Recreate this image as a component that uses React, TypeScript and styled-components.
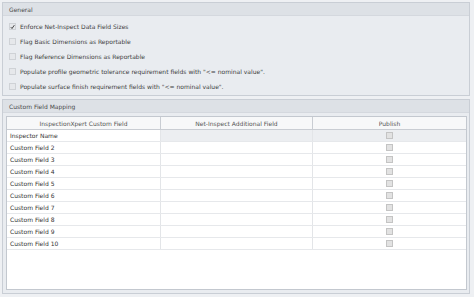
import type { FC } from "react";
import styled, { createGlobalStyle } from "styled-components";

const GlobalStyle = createGlobalStyle`
  html, body {
    margin: 0;
    padding: 0;
    background: #eef0f3;
  }
`;

const Screen = styled.div`
  width: 474px;
  height: 297px;
  box-sizing: border-box;
  padding: 2px 4px 3px 2px;
  display: flex;
  flex-direction: column;
  gap: 3px;
  background: #eef0f3;
  font-family: "DejaVu Sans", "Liberation Sans", sans-serif;
  font-size: 6px;
  color: #404040;
  overflow: hidden;
`;

const Panel = styled.section<{ $grow?: boolean }>`
  display: flex;
  flex-direction: column;
  border: 1px solid #c9ced5;
  background: #e9ecf0;
  flex: ${(p) => (p.$grow ? "1" : "none")};
  height: ${(p) => (p.$grow ? "auto" : "92px")};
  min-height: 0;
`;

const PanelHeader = styled.div`
  height: 12px;
  display: flex;
  align-items: center;
  padding-left: 6px;
  background: #dde1e6;
  border-bottom: 1px solid #d4d8de;
  color: #4a4a4a;
`;

const OptionList = styled.div`
  display: flex;
  flex-direction: column;
  padding: 3px 5px 0 6px;
`;

const OptionRow = styled.label`
  height: 15px;
  display: flex;
  align-items: center;
  gap: 4px;
`;

const Box = styled.span<{ $dark?: boolean }>`
  width: 7px;
  height: 7px;
  box-sizing: border-box;
  border: 1px solid ${(p) => (p.$dark ? "#c4c4c4" : "#cfd2d6")};
  background: ${(p) => (p.$dark ? "#e2e2e2" : "#e6e8eb")};
  display: inline-flex;
  align-items: center;
  justify-content: center;
  flex: none;
`;

const MappingBody = styled.div`
  flex: 1;
  display: flex;
  padding: 3px 2px 3px 3px;
  min-height: 0;
`;

const Table = styled.div`
  flex: 1;
  display: flex;
  flex-direction: column;
  background: #ffffff;
  border: 1px solid #c3c8cf;
`;

const Row = styled.div<{ $header?: boolean }>`
  display: grid;
  grid-template-columns: 154px 152px 1fr;
  height: ${(p) => (p.$header ? "13px" : "12px")};
  box-sizing: border-box;
  border-bottom: 1px solid ${(p) => (p.$header ? "#c9cdd3" : "#e6e8eb")};
  background: ${(p) => (p.$header ? "#f7f8f9" : "#ffffff")};
`;

const Cell = styled.div<{ $center?: boolean; $shade?: boolean; $last?: boolean }>`
  display: flex;
  align-items: center;
  justify-content: ${(p) => (p.$center ? "center" : "flex-start")};
  padding-left: ${(p) => (p.$center ? "0" : "3px")};
  border-right: ${(p) => (p.$last ? "none" : "1px solid #e3e5e8")};
  background: ${(p) => (p.$shade ? "#eceef1" : "transparent")};
  color: #333;
`;

const HeadCell = styled(Cell)`
  border-right: ${(p) => (p.$last ? "none" : "1px solid #c9cdd3")};
  color: #555;
`;

const Check: FC = () => (
  <svg width="6" height="6" viewBox="0 0 6 6">
    <path d="M1 3.2 L2.4 4.8 L5.2 0.8" stroke="#333" strokeWidth="1.1" fill="none" />
  </svg>
);

const options = [
  { text: "Enforce Net-Inspect Data Field Sizes", checked: true },
  { text: "Flag Basic Dimensions as Reportable", checked: false },
  { text: "Flag Reference Dimensions as Reportable", checked: false },
  {
    text: 'Populate profile geometric tolerance requirement fields with "<= nominal value".',
    checked: false,
  },
  { text: 'Populate surface finish requirement fields with "<= nominal value".', checked: false },
];

const fields = [
  "Inspector Name",
  "Custom Field 2",
  "Custom Field 3",
  "Custom Field 4",
  "Custom Field 5",
  "Custom Field 6",
  "Custom Field 7",
  "Custom Field 8",
  "Custom Field 9",
  "Custom Field 10",
];

const App: FC = () => {
  return (
    <>
      <GlobalStyle />
      <Screen>
        {/** General options */}
        <Panel>
          <PanelHeader>General</PanelHeader>
          <OptionList>
            {options.map((o) => (
              <OptionRow key={o.text}>
                <Box>{o.checked && <Check />}</Box>
                {o.text}
              </OptionRow>
            ))}
          </OptionList>
        </Panel>

        {/** Field mapping grid */}
        <Panel $grow>
          <PanelHeader>Custom Field Mapping</PanelHeader>
          <MappingBody>
            <Table>
              <Row $header>
                <HeadCell $center>InspectionXpert Custom Field</HeadCell>
                <HeadCell $center>Net-Inspect Additional Field</HeadCell>
                <HeadCell $center $last>
                  Publish
                </HeadCell>
              </Row>
              {fields.map((f, i) => (
                <Row key={f}>
                  <Cell>{f}</Cell>
                  <Cell $shade={i === 0} />
                  <Cell $center $last $shade={i === 0}>
                    <Box $dark />
                  </Cell>
                </Row>
              ))}
            </Table>
          </MappingBody>
        </Panel>
      </Screen>
    </>
  );
};

export default App;
